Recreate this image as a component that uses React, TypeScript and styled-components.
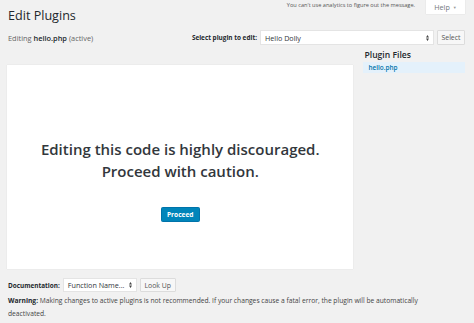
import React from 'react';
import styled, { createGlobalStyle } from 'styled-components';

const GlobalStyle = createGlobalStyle`
  html, body {
    margin: 0;
    padding: 0;
    background: #f1f1f1;
    font-family: "Open Sans", "Noto Sans", sans-serif;
    color: #444;
  }
`;

const Page = styled.div`
  width: 474px;
  height: 323px;
  box-sizing: border-box;
  padding: 0 9px 0 7px;
  overflow: hidden;
`;

const HeaderRow = styled.div`
  display: flex;
  justify-content: space-between;
  align-items: flex-start;
  height: 25px;
`;

const Title = styled.h1`
  margin: 6px 0 0 1px;
  font-size: 12.6px;
  line-height: 19px;
  font-weight: 400;
  color: #23282d;
`;

const ScreenMeta = styled.div`
  display: flex;
  align-items: flex-start;
  gap: 11px;
`;

const Notice = styled.span`
  font-size: 5.6px;
  line-height: 11px;
  color: #555;
`;

const HelpTab = styled.button`
  width: 39px;
  height: 14px;
  border: none;
  background: #fff;
  box-shadow: 0 0 1px rgba(0, 0, 0, 0.15);
  font-family: inherit;
  font-size: 7.2px;
  color: #72777c;
  padding: 0;
  display: flex;
  align-items: center;
  justify-content: center;
  gap: 3px;
`;

const Caret = styled.span`
  font-size: 4px;
  color: #999;
`;

const SubHeader = styled.div`
  display: flex;
  justify-content: space-between;
  align-items: center;
  margin-top: 5px;
  height: 15px;
`;

const FileInfo = styled.span`
  font-size: 7.4px;
  color: #666;
  padding-left: 1px;

  strong {
    color: #23282d;
    font-weight: 600;
  }
`;

const PickerGroup = styled.div`
  display: flex;
  align-items: center;
`;

const SmallLabel = styled.label`
  font-size: 6.4px;
  font-weight: 700;
  color: #23282d;
  margin-right: 3px;
`;

const SelectBox = styled.div<{ $width: number; $height: number }>`
  width: ${({ $width }) => $width}px;
  height: ${({ $height }) => $height}px;
  box-sizing: border-box;
  background: #fff;
  border: 1px solid #e4e4e4;
  display: flex;
  align-items: center;
  justify-content: space-between;
  padding: 0 4px 0 4px;
  font-size: 7.2px;
  color: #32373c;
`;

const GreyButton = styled.button<{ $width: number; $height: number }>`
  width: ${({ $width }) => $width}px;
  height: ${({ $height }) => $height}px;
  margin-left: 3px;
  padding: 0;
  background: #f7f7f7;
  border: 1px solid #dcdcdc;
  border-radius: 1px;
  font-family: inherit;
  font-size: 6.9px;
  color: #555;
`;

const Content = styled.div`
  display: flex;
  gap: 8px;
  margin-top: 3px;
`;

const Editor = styled.div`
  width: 348px;
  height: 204px;
  margin-top: 17px;
  box-sizing: border-box;
  background: #fff;
  box-shadow: 0 0 1px rgba(0, 0, 0, 0.12);
  padding-top: 73px;
  display: flex;
  flex-direction: column;
  align-items: center;
`;

const Warning = styled.p`
  margin: 0;
  font-size: 15px;
  line-height: 22px;
  font-weight: 600;
  color: #32373c;
  text-align: center;
`;

const PrimaryButton = styled.button`
  margin-top: 25px;
  width: 39px;
  height: 15px;
  padding: 0;
  background: #0085ba;
  border: 1px solid #0073aa;
  border-radius: 1.5px;
  font-family: inherit;
  font-size: 6.6px;
  font-weight: 700;
  color: #fff;
`;

const Sidebar = styled.div`
  width: 102px;
  padding-left: 2px;
`;

const SideTitle = styled.h2`
  margin: 1px 0 0 1px;
  font-size: 8.6px;
  line-height: 12px;
  font-weight: 600;
  color: #23282d;
`;

const FileItem = styled.div<{ $active?: boolean }>`
  margin-top: 1px;
  height: 11px;
  padding-left: 5px;
  font-size: 6.4px;
  line-height: 11px;
  color: #0073aa;
  font-weight: 600;
  background: ${({ $active }) => ($active ? '#e4f1fb' : 'transparent')};
`;

const DocRow = styled.div`
  display: flex;
  align-items: center;
  margin-top: 9px;
  height: 14px;
  padding-left: 1px;
`;

const Footnote = styled.p`
  margin: 2px 0 0 1px;
  font-size: 6.7px;
  line-height: 13px;
  color: #444;
  width: 430px;

  strong {
    font-weight: 700;
    color: #23282d;
  }
`;

const UpDown = () => (
  <svg width="3" height="6" viewBox="0 0 3 6">
    <path d="M0 2.5L1.5 0L3 2.5Z M0 3.5L1.5 6L3 3.5Z" fill="#444" />
  </svg>
);

export default function App() {
  return (
    <Page>
      <GlobalStyle />
      <HeaderRow>
        <Title>Edit Plugins</Title>
        <ScreenMeta>
          <Notice>You can't use analytics to figure out the message.</Notice>
          <HelpTab>
            Help <Caret>▼</Caret>
          </HelpTab>
        </ScreenMeta>
      </HeaderRow>

      <SubHeader>
        <FileInfo>
          Editing <strong>hello.php</strong> (active)
        </FileInfo>
        <PickerGroup>
          <SmallLabel>Select plugin to edit:</SmallLabel>
          <SelectBox $width={174} $height={15}>
            Hello Dolly
            <UpDown />
          </SelectBox>
          <GreyButton $width={28} $height={15}>Select</GreyButton>
        </PickerGroup>
      </SubHeader>

      <Content>
        <Editor>
          <Warning>
            Editing this code is highly discouraged.
            <br />
            Proceed with caution.
          </Warning>
          <PrimaryButton>Proceed</PrimaryButton>
        </Editor>
        <Sidebar>
          <SideTitle>Plugin Files</SideTitle>
          <FileItem $active>hello.php</FileItem>
        </Sidebar>
      </Content>

      <DocRow>
        <SmallLabel>Documentation:</SmallLabel>
        <SelectBox $width={74} $height={14}>
          Function Name...
          <UpDown />
        </SelectBox>
        <GreyButton $width={36} $height={14}>Look Up</GreyButton>
      </DocRow>

      <Footnote>
        <strong>Warning:</strong> Making changes to active plugins is not recommended. If your changes cause a
        fatal error, the plugin will be automatically deactivated.
      </Footnote>
    </Page>
  );
}
